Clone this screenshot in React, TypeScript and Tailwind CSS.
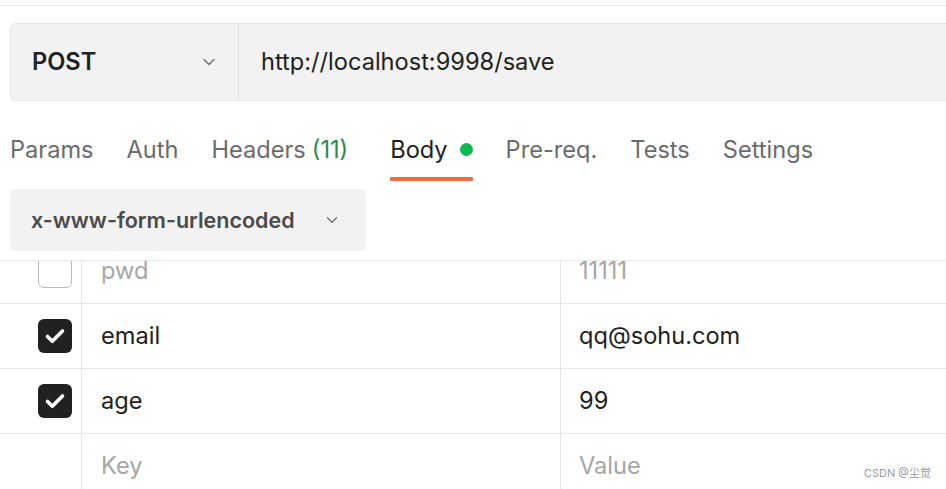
import { ChevronDown } from 'lucide-react'

const font = { fontFamily: 'Inter, "Noto Sans", sans-serif' }

const tabs = [
  { label: 'Params' },
  { label: 'Auth' },
  { label: 'Headers', count: '(11)', wide: true },
  { label: 'Body', active: true },
  { label: 'Pre-req.' },
  { label: 'Tests' },
  { label: 'Settings' },
]

const rows = [
  { key: 'pwd', value: '11111', checked: false, muted: true },
  { key: 'email', value: 'qq@sohu.com', checked: true },
  { key: 'age', value: '99', checked: true },
]

function Checkbox({ checked }: { checked: boolean }) {
  if (!checked) {
    return <div className="w-[34px] h-[34px] rounded-[6px] border border-[#b9b9b9] bg-white" />
  }
  return (
    <div className="w-[34px] h-[34px] rounded-[6px] bg-[#212121] flex items-center justify-center">
      <svg width="24" height="24" viewBox="0 0 24 24" fill="none">
        <path d="M4.5 12.5l4.8 4.8L19.5 7" stroke="white" strokeWidth="3.6" strokeLinecap="round" strokeLinejoin="round" />
      </svg>
    </div>
  )
}

function Row({ k, v, checked, muted }: { k: string; v: string; checked?: boolean; muted?: boolean }) {
  return (
    <div className="flex h-[65px] border-b border-[#e6e6e6]">
      <div className="w-[82px] flex items-center pl-[38px] border-r border-[#e6e6e6] shrink-0">
        {checked !== undefined && <Checkbox checked={checked} />}
      </div>
      <div className={`w-[479px] pl-[19px] flex items-center border-r border-[#e6e6e6] shrink-0 ${muted ? 'text-[#a6a6a6]' : 'text-[#212121]'}`}>
        {k}
      </div>
      <div className={`flex-1 pl-[18px] flex items-center ${muted ? 'text-[#a6a6a6]' : 'text-[#212121]'}`}>{v}</div>
    </div>
  )
}

export default function App() {
  return (
    <div className="w-[946px] h-[489px] bg-white overflow-hidden relative text-[23.6px]" style={font}>
      {/* top edge */}
      <div className="h-[6px] border-b border-[#e8e8e8]" />

      {/* request bar */}
      <div className="mt-[17px] ml-[10px] h-[78px] flex bg-[#f2f2f2] border border-r-0 border-[#e4e4e4] rounded-l-[6px]">
        <div className="w-[228px] flex items-center justify-between pl-[21px] pr-[19px] border-r border-[#e2e2e2]">
          <span className="font-semibold text-[#212121]">POST</span>
          <ChevronDown className="w-[20px] h-[20px] text-[#6b6b6b]" strokeWidth={1.6} />
        </div>
        <div className="flex-1 flex items-center pl-[22px] text-[#212121]">http://localhost:9998/save</div>
      </div>

      {/* tabs */}
      <div className="mt-[21px] ml-[10px] flex h-[60px]">
        {tabs.map((t) => (
          <div key={t.label} className={`${t.wide ? 'mr-[42px]' : 'mr-[33px]'} flex flex-col`}>
            <div className={`flex items-center h-[55px] ${t.active ? 'text-[#212121]' : 'text-[#6b6b6b]'}`}>
              {t.label}
              {t.count && <span className="ml-[6px] text-[#2b8a4e]">{t.count}</span>}
              {t.active && <span className="ml-[12px] w-[13px] h-[13px] rounded-full bg-[#0cbb52]" />}
            </div>
            {t.active && <div className="h-[4px] bg-[#f26b3a] rounded-[1px]" />}
          </div>
        ))}
      </div>

      {/* body type */}
      <div className="mt-[7px] ml-[10px] w-[356px] h-[62px] rounded-[6px] bg-[#f2f2f2] flex items-center justify-between pl-[21px] pr-[25px]">
        <span className="font-semibold text-[21.5px] text-[#4a4a4a]">x-www-form-urlencoded</span>
        <ChevronDown className="w-[18px] h-[18px] text-[#6b6b6b]" strokeWidth={1.6} />
      </div>

      {/* table */}
      <div className="mt-[9px] border-t border-[#e6e6e6]">
        <div className="h-[43px] overflow-hidden">
          <div className="-mt-[22px]">
            <Row k={rows[0].key} v={rows[0].value} checked={rows[0].checked} muted />
          </div>
        </div>
        {rows.slice(1).map((r) => (
          <Row key={r.key} k={r.key} v={r.value} checked={r.checked} />
        ))}
        <Row k="Key" v="Value" muted />
      </div>

      <div className="absolute right-[15px] bottom-[8px] text-[11px] text-[#9a9a9a]" style={{ fontFamily: 'Inter, "Noto Sans CJK SC", sans-serif' }}>
        CSDN @尘觉
      </div>
    </div>
  )
}
